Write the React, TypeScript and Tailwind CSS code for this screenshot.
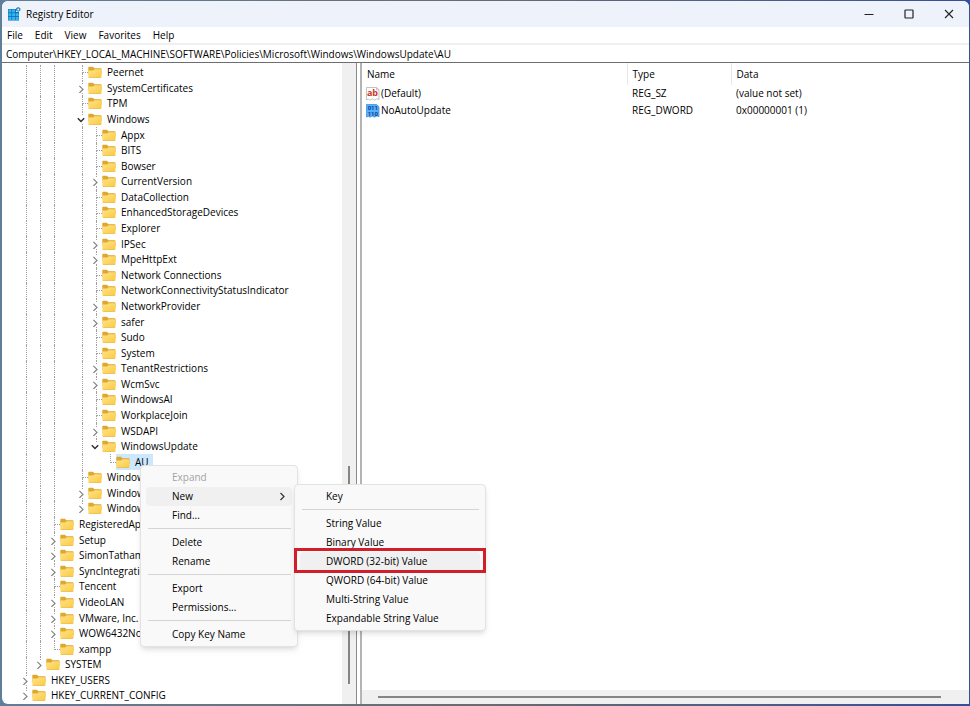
import { useState } from "react"

type TreeNode = {
  name: string
  depth: number
  guides: number[]
  state?: "open" | "closed"
  last?: boolean
}

const outer = [0, 1, 2]
const inner = [0, 1, 2, 4]

const nodes: TreeNode[] = [
  { name: "Peernet", depth: 4, guides: outer },
  { name: "SystemCertificates", depth: 4, guides: outer, state: "closed" },
  { name: "TPM", depth: 4, guides: outer },
  { name: "Windows", depth: 4, guides: outer, state: "open" },
  { name: "Appx", depth: 5, guides: inner },
  { name: "BITS", depth: 5, guides: inner },
  { name: "Bowser", depth: 5, guides: inner },
  { name: "CurrentVersion", depth: 5, guides: inner, state: "closed" },
  { name: "DataCollection", depth: 5, guides: inner },
  { name: "EnhancedStorageDevices", depth: 5, guides: inner },
  { name: "Explorer", depth: 5, guides: inner },
  { name: "IPSec", depth: 5, guides: inner, state: "closed" },
  { name: "MpeHttpExt", depth: 5, guides: inner, state: "closed" },
  { name: "Network Connections", depth: 5, guides: inner },
  { name: "NetworkConnectivityStatusIndicator", depth: 5, guides: inner },
  { name: "NetworkProvider", depth: 5, guides: inner, state: "closed" },
  { name: "safer", depth: 5, guides: inner, state: "closed" },
  { name: "Sudo", depth: 5, guides: inner },
  { name: "System", depth: 5, guides: inner },
  { name: "TenantRestrictions", depth: 5, guides: inner, state: "closed" },
  { name: "WcmSvc", depth: 5, guides: inner, state: "closed" },
  { name: "WindowsAI", depth: 5, guides: inner },
  { name: "WorkplaceJoin", depth: 5, guides: inner },
  { name: "WSDAPI", depth: 5, guides: inner, state: "closed" },
  { name: "WindowsUpdate", depth: 5, guides: inner, state: "open", last: true },
  { name: "AU", depth: 6, guides: inner, last: true },
  { name: "Windows A", depth: 4, guides: outer },
  { name: "Windows D", depth: 4, guides: outer, state: "closed" },
  { name: "Windows N", depth: 4, guides: outer, state: "closed", last: true },
  { name: "RegisteredApps", depth: 2, guides: [0, 1] },
  { name: "Setup", depth: 2, guides: [0, 1], state: "closed" },
  { name: "SimonTatham", depth: 2, guides: [0, 1], state: "closed" },
  { name: "SyncIntegrations", depth: 2, guides: [0, 1], state: "closed" },
  { name: "Tencent", depth: 2, guides: [0, 1] },
  { name: "VideoLAN", depth: 2, guides: [0, 1], state: "closed" },
  { name: "VMware, Inc.", depth: 2, guides: [0, 1], state: "closed" },
  { name: "WOW6432Node", depth: 2, guides: [0, 1], state: "closed" },
  { name: "xampp", depth: 2, guides: [0, 1], last: true },
  { name: "SYSTEM", depth: 1, guides: [0], state: "closed", last: true },
  { name: "HKEY_USERS", depth: 0, guides: [], state: "closed" },
  { name: "HKEY_CURRENT_CONFIG", depth: 0, guides: [], state: "closed", last: true },
]

const menuBar = ["File", "Edit", "View", "Favorites", "Help"]

function RegistryIcon() {
  return (
    <svg width="14" height="14" viewBox="0 0 14 14" aria-hidden="true">
      <path d="M1 2h8v3h3v8.5H1z" fill="#0c6fb4" />
      <g fill="#35b5ee">
        <rect x="1.4" y="2.4" width="3" height="3" />
        <rect x="5.1" y="2.4" width="3" height="3" />
        <rect x="1.4" y="6.2" width="3" height="3" />
        <rect x="5.1" y="6.2" width="3" height="3" />
        <rect x="8.7" y="6.2" width="3" height="3" />
        <rect x="1.4" y="10" width="3" height="3" />
        <rect x="5.1" y="10" width="3" height="3" />
        <rect x="8.7" y="10" width="3" height="3" />
      </g>
      <path d="M11.2 0l2.2 1.2v2.4L11.2 4.8 9 3.6V1.2z" fill="#2b86b8" />
      <circle cx="11.2" cy="2.4" r="1" fill="#dff3fc" />
    </svg>
  )
}

function FolderIcon() {
  return (
    <svg width="14" height="13" viewBox="0 0 14 13" className="shrink-0" aria-hidden="true">
      <defs>
        <linearGradient id="folder" x1="0" y1="0" x2="1" y2="1">
          <stop offset="0" stopColor="#ffe48e" />
          <stop offset="1" stopColor="#fbc93d" />
        </linearGradient>
      </defs>
      <path d="M0.3 1.8c0-.7.4-1 1-1h3.6l1.5 1.4h6c.7 0 1.1.4 1.1 1V8H.3z" fill="#dfa72b" />
      <path d="M0.3 4.6h4.9l1.3-1.4h6c.6 0 1 .4 1 1v6.6c0 .6-.4 1-1 1H1.3c-.6 0-1-.4-1-1z" fill="url(#folder)" />
      <path d="M0.6 11.3c.2.3.4.5.8.5h11c.4 0 .7-.2.9-.5z" fill="#e0ac36" />
    </svg>
  )
}

function Chevron({ open }: { open: boolean }) {
  return (
    <svg width="14" height="9" viewBox="0 0 14 9" className="shrink-0" aria-hidden="true">
      {open ? (
        <path d="M3.8 3.3L7 6.5l3.2-3.2" fill="none" stroke="#303030" strokeWidth="1.5" />
      ) : (
        <path d="M5.4 1.9L9 5.4 5.4 8.9" fill="none" stroke="#808080" strokeWidth="1.2" />
      )}
    </svg>
  )
}

function StringIcon() {
  return (
    <svg width="14" height="14" viewBox="0 0 14 14" className="shrink-0" aria-hidden="true">
      <path d="M0.5 0.5h10l2.5 2.3v9.8l-2.2-.8-2.3 1.4-2.2-1.4-2.3 1.4-1.6-1-1.9.6z" fill="#fff" stroke="#b4b4b4" strokeWidth="0.8" />
      <path d="M10.5 0.5v2.3H13" fill="none" stroke="#b4b4b4" strokeWidth="0.8" />
      <text x="6.5" y="8.8" textAnchor="middle" fontSize="9" fontWeight="700" fill="#c8371f" fontFamily="Open Sans">ab</text>
    </svg>
  )
}

function BinaryIcon() {
  return (
    <svg width="14" height="14" viewBox="0 0 14 14" className="shrink-0" aria-hidden="true">
      <path d="M0.5 0.5h10l2.5 2.3v9.8l-2.2-.6-2.3 1.2-2.2-1.2-2.3 1.2-1.6-.8-1.9.6z" fill="#58b0f8" stroke="#3f93dd" strokeWidth="0.8" />
      <text x="6.8" y="6" textAnchor="middle" fontSize="6" fontWeight="700" fill="#0a3f9c" fontFamily="Roboto">011</text>
      <text x="6.8" y="11.5" textAnchor="middle" fontSize="6" fontWeight="700" fill="#0a3f9c" fontFamily="Roboto">110</text>
    </svg>
  )
}

// One 14px column of the tree: a line running straight through
function Guide({ show }: { show: boolean }) {
  return (
    <span className="flex w-[14px] shrink-0 pl-2">
      {show && <span className="border-l border-dotted border-[#a0a0a0]" />}
    </span>
  )
}

// The column next to the folder: an elbow, or an arrow for keys with children
function Branch({ node }: { node: TreeNode }) {
  if (node.state) {
    return (
      <span className="flex w-[14px] shrink-0 flex-col">
        <span className="ml-2 flex-1 border-l border-dotted border-[#a0a0a0]" />
        <Chevron open={node.state === "open"} />
        <span className={`ml-2 flex-1 ${node.last ? "" : "border-l border-dotted border-[#a0a0a0]"}`} />
      </span>
    )
  }
  return (
    <span className="flex w-[14px] shrink-0 flex-col pl-2">
      <span className="flex-1 border-b border-l border-dotted border-[#a0a0a0]" />
      <span className={`flex-1 ${node.last ? "" : "border-l border-dotted border-[#a0a0a0]"}`} />
    </span>
  )
}

function MenuItem({ label, disabled, active }: { label: string; disabled?: boolean; active?: boolean }) {
  return (
    <button
      type="button"
      role="menuitem"
      disabled={disabled}
      className={`flex h-[19px] w-full items-center rounded-sm pl-[26px] text-left ${
        disabled ? "text-[#a3a3a3]" : ""
      } ${active ? "bg-[#f0f0f0]" : ""}`}
    >
      {label}
    </button>
  )
}

function Separator() {
  return <div role="separator" className="my-[3px] mr-px ml-0.5 h-0.5 border-t border-[#d4d4d4]" />
}

function NewMenu() {
  return (
    <div role="menu" className="absolute -top-[3px] left-full z-20 ml-0.5 w-[192px] rounded border border-[#e3e3e3] bg-[#f9f9f9] px-[5px] py-0.5 shadow-md">
      <MenuItem label="Key" />
      <Separator />
      <MenuItem label="String Value" />
      <MenuItem label="Binary Value" />
      <div className="relative">
        <MenuItem label="DWORD (32-bit) Value" active />
        <span className="pointer-events-none absolute -inset-x-[6px] -top-1 -bottom-0.5 border-[3px] border-[#d01f2b]" />
      </div>
      <MenuItem label="QWORD (64-bit) Value" />
      <MenuItem label="Multi-String Value" />
      <MenuItem label="Expandable String Value" />
    </div>
  )
}

function ContextMenu() {
  return (
    <div role="menu" className="absolute top-[11px] left-6 z-10 w-[158px] rounded border border-[#e3e3e3] bg-[#f9f9f9] px-[5px] py-0.5 text-black shadow-md">
      <MenuItem label="Expand" disabled />
      <div className="relative">
        <button
          type="button"
          role="menuitem"
          aria-haspopup="menu"
          className="flex h-[19px] w-full items-center justify-between rounded-sm bg-[#f0f0f0] pr-1.5 pl-[26px] text-left"
        >
          New
          <svg width="7" height="9" viewBox="0 0 7 9" aria-hidden="true">
            <path d="M1.5 1L5 4.5 1.5 8" fill="none" stroke="#333" strokeWidth="1.2" />
          </svg>
        </button>
        <NewMenu />
      </div>
      <MenuItem label="Find..." />
      <Separator />
      <MenuItem label="Delete" />
      <MenuItem label="Rename" />
      <Separator />
      <MenuItem label="Export" />
      <MenuItem label="Permissions..." />
      <Separator />
      <MenuItem label="Copy Key Name" />
    </div>
  )
}

function TreeRow({ node, selected }: { node: TreeNode; selected: boolean }) {
  const levels = Array.from({ length: node.depth }, (_, i) => i)

  return (
    <div role="treeitem" aria-level={node.depth + 1} aria-selected={selected} className="flex min-h-[15px] flex-1">
      {levels.map((level) => (
        <Guide key={level} show={node.guides.includes(level)} />
      ))}
      <Branch node={node} />
      <div className={`relative flex items-center gap-[5px] ${selected ? "bg-[#cce8ff] pr-1" : ""}`}>
        <FolderIcon />
        <span className="leading-[15px] whitespace-nowrap">{node.name}</span>
        {selected && <ContextMenu />}
      </div>
    </div>
  )
}

export default function App() {
  const [path, setPath] = useState(
    "Computer\\HKEY_LOCAL_MACHINE\\SOFTWARE\\Policies\\Microsoft\\Windows\\WindowsUpdate\\AU"
  )

  return (
    <div className="flex min-h-screen flex-col bg-linear-to-r from-[#5f7f98] via-[#6b6a70] to-[#33509a] pt-px pr-px pb-0.5 pl-0.5 font-['Open_Sans','Noto_Sans',sans-serif] text-[10px] text-black">
      <div className="flex flex-1 flex-col rounded-md bg-white">
        {/* Title bar */}
        <header className="flex h-[26px] items-center rounded-t-md bg-[#eef2fa] pl-[5px]">
          <RegistryIcon />
          <h1 className="flex-1 pl-[5px]">Registry Editor</h1>
          <button type="button" aria-label="Minimize" className="flex h-full w-10 items-center justify-center">
            <svg width="10" height="10" viewBox="0 0 10 10"><path d="M0.5 5.5h9" stroke="#222" /></svg>
          </button>
          <button type="button" aria-label="Maximize" className="flex h-full w-10 items-center justify-center">
            <svg width="10" height="10" viewBox="0 0 10 10"><rect x="1" y="1" width="8" height="8" rx="0.5" fill="none" stroke="#222" strokeWidth="1.2" /></svg>
          </button>
          <button type="button" aria-label="Close" className="flex h-full w-10 items-center justify-center">
            <svg width="10" height="10" viewBox="0 0 10 10"><path d="M1 1l8 8M9 1L1 9" stroke="#222" strokeWidth="1.1" /></svg>
          </button>
        </header>

        {/* Menu bar */}
        <nav className="flex h-[18px] items-center gap-3 border-b-2 border-[#f0f0f0] pl-[5px]">
          {menuBar.map((item) => (
            <button key={item} type="button">{item}</button>
          ))}
        </nav>

        {/* Address bar */}
        <input
          type="text"
          aria-label="Registry path"
          value={path}
          onChange={(e) => setPath(e.target.value)}
          className="h-[18px] w-full border-b border-[#6e6e6e] pl-1 outline-none"
        />

        <main className="flex flex-1">
          {/* Key tree */}
          <section className="flex w-[355px] shrink-0 border-r border-[#8a8a8a]">
            <div role="tree" aria-label="Registry keys" className="flex flex-1 flex-col pt-0.5 pl-4">
              {nodes.map((node) => (
                <TreeRow key={node.name} node={node} selected={node.name === "AU"} />
              ))}
            </div>
            <div className="flex w-[14px] flex-col bg-[#f0f0f0] pl-1.5">
              <span className="mt-auto mb-5 h-[34%] w-0.5 bg-[#858585]" />
            </div>
          </section>

          {/* Values */}
          <section className="ml-[3px] flex min-w-0 flex-1 flex-col border-l-2 border-[#b4b4b4]">
            <table className="w-full table-fixed border-collapse text-left">
              <colgroup>
                <col className="w-[265px]" />
                <col className="w-[104px]" />
                <col />
              </colgroup>
              <thead>
                <tr className="h-[22px]">
                  <th className="border-r border-[#e8e8e8] p-0 pl-[5px] font-normal">Name</th>
                  <th className="border-r border-[#e8e8e8] p-0 pl-[5px] font-normal">Type</th>
                  <th className="p-0 pl-[5px] font-normal">Data</th>
                </tr>
              </thead>
              <tbody>
                <tr className="h-[17px]">
                  <td className="p-0 pl-1">
                    <span className="flex items-center gap-px"><StringIcon />(Default)</span>
                  </td>
                  <td className="p-0 pl-[5px]">REG_SZ</td>
                  <td className="p-0 pl-[5px]">(value not set)</td>
                </tr>
                <tr className="h-[17px]">
                  <td className="p-0 pl-1">
                    <span className="flex items-center gap-px"><BinaryIcon />NoAutoUpdate</span>
                  </td>
                  <td className="p-0 pl-[5px]">REG_DWORD</td>
                  <td className="p-0 pl-[5px]">0x00000001 (1)</td>
                </tr>
              </tbody>
            </table>
            <div className="mt-auto flex h-[14px] items-center bg-[#f0f0f0] pr-7 pl-4">
              <span className="h-0.5 flex-1 bg-[#858585]" />
            </div>
          </section>
        </main>
      </div>
    </div>
  )
}
